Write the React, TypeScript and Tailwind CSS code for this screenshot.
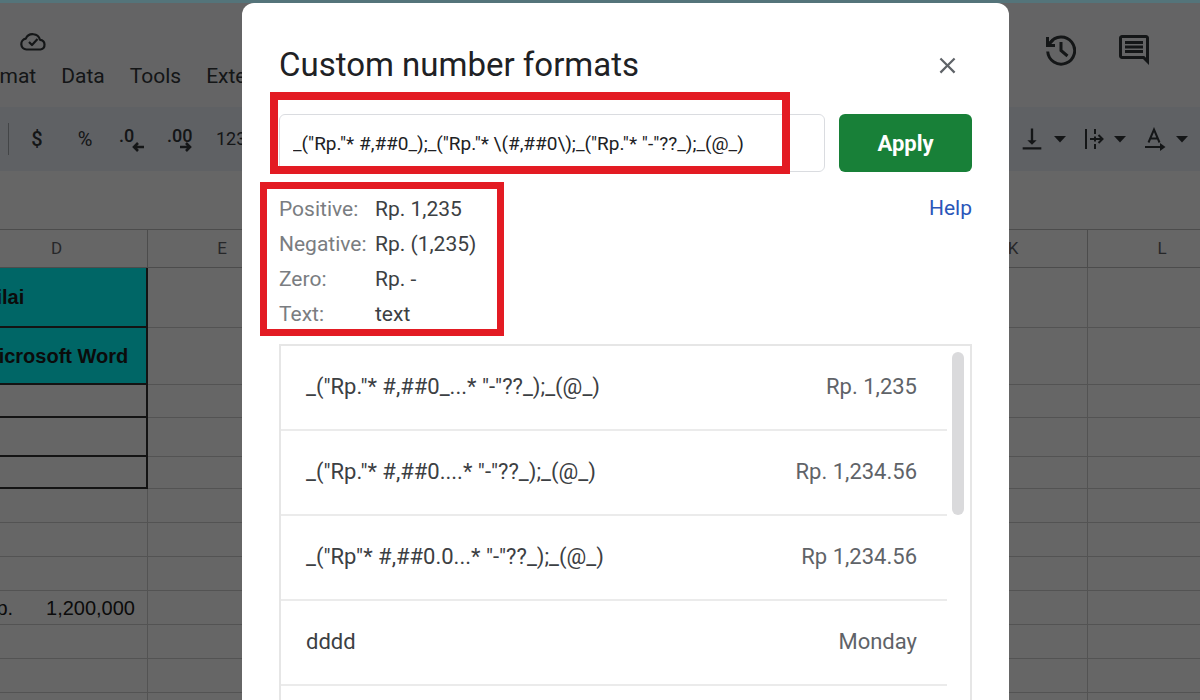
import { useState } from "react";
import type { ReactNode } from "react";
import { MdClose, MdOutlineInsertComment, MdVerticalAlignBottom } from "react-icons/md";

const FORMATS = [
  { pattern: '_("Rp."* #,##0_...* "-"??_);_(@_)', sample: "Rp. 1,235" },
  { pattern: '_("Rp."* #,##0....* "-"??_);_(@_)', sample: "Rp. 1,234.56" },
  { pattern: '_("Rp"* #,##0.0...* "-"??_);_(@_)', sample: "Rp 1,234.56" },
  { pattern: "dddd", sample: "Monday" },
  { pattern: "", sample: "" },
];

const PREVIEW = [
  { label: "Positive:", value: "Rp. 1,235" },
  { label: "Negative:", value: "Rp. (1,235)" },
  { label: "Zero:", value: "Rp. -" },
  { label: "Text:", value: "text" },
];

const COLUMNS = [
  { name: "D", width: "w-[182px]" },
  { name: "E", width: "w-[149px]" },
  { name: "F", width: "" },
  { name: "G", width: "" },
  { name: "H", width: "" },
  { name: "I", width: "" },
  { name: "J", width: "" },
  { name: "K", width: "w-[149px]" },
  { name: "L", width: "w-[149px]" },
];

// boxed = cell D has the black table border, fill = cyan header cell
const ROWS: { height: string; boxed?: boolean; fill?: boolean; cell?: ReactNode }[] = [
  { height: "h-[60px]", boxed: true, fill: true, cell: "Nilai" },
  { height: "h-[57px]", boxed: true, fill: true, cell: "Microsoft Word" },
  { height: "h-[33px]", boxed: true },
  { height: "h-[39px]", boxed: true },
  { height: "h-[32px]", boxed: true },
  { height: "h-[34px]" },
  { height: "h-[34px]" },
  { height: "h-[34px]" },
  {
    height: "h-[34px]",
    cell: (
      <span className="flex justify-between">
        <span>Rp.</span>
        <span>1,200,000</span>
      </span>
    ),
  },
  { height: "h-[34px]" },
  { height: "h-[34px]" },
  { height: "h-[34px]" },
];

function CloudIcon() {
  return (
    <svg viewBox="0 0 28 20" className="h-5 w-7" fill="none" stroke="currentColor" strokeWidth="2.2" strokeLinejoin="round">
      <path d="M7.500 18.500A5.500 5.500 0 0 1 6.800 7.600 7.600 7.600 0 0 1 21 8.800 4.900 4.900 0 0 1 21.500 18.500z" />
      <path d="M10 11l3 3 5.500-6" />
    </svg>
  );
}

function HistoryIcon() {
  return (
    <svg viewBox="0 0 32 32" className="size-8" fill="none" stroke="currentColor" strokeWidth="3">
      <path d="M3.700 17.500A13.500 13.500 0 1 0 6 9" />
      <path d="M3.500 3v8.500H11M4 11l5-5" />
      <path d="M17 8v8.500l6.500 5.500" />
    </svg>
  );
}

function Caret() {
  return (
    <svg viewBox="0 0 12 7" className="h-[7px] w-3" fill="currentColor">
      <path d="M0 0h12L6 6.500z" />
    </svg>
  );
}

function Arrow({ flip = false }: { flip?: boolean }) {
  return (
    <svg viewBox="0 0 12 10" className={`h-[10px] w-3 ${flip ? "rotate-180" : ""}`} fill="none" stroke="currentColor" strokeWidth="2.6">
      <path d="M0 5h10M6 1l4 4-4 4" />
    </svg>
  );
}

function OverflowIcon() {
  return (
    <svg viewBox="0 0 20 22" className="h-[22px] w-5" fill="none" stroke="currentColor" strokeWidth="2">
      <path d="M2 1v20M11 1v5M11 16v5M6 11h12M14.500 7l4 4-4 4M11 8.500v5" />
    </svg>
  );
}

function RotateIcon() {
  return (
    <svg viewBox="0 0 22 24" className="h-6 w-[22px]" fill="none" stroke="currentColor" strokeWidth="2">
      <path d="M4.500 15.500L10 2.500l5.500 13M6.500 11.500h7" />
      <path d="M1 20h17" />
      <path d="M16 16l5.500 4-5.500 4z" fill="currentColor" stroke="none" />
    </svg>
  );
}

function Header() {
  return (
    <header className="flex h-[104px] justify-between bg-[#f9fbfd] text-[#34373b]">
      <div>
        <div className="flex h-12 items-end pl-[19px]">
          <CloudIcon />
        </div>
        <nav className="-ml-[31px] mt-[11px] flex gap-[25px] text-[21px] leading-7">
          <button>Format</button>
          <button>Data</button>
          <button>Tools</button>
          <button>Extensions</button>
        </nav>
      </div>
      <div className="flex items-center gap-10 self-start pt-[29px] pr-12">
        <button aria-label="Version history">
          <HistoryIcon />
        </button>
        <button aria-label="Comments">
          <MdOutlineInsertComment className="size-9" />
        </button>
      </div>
    </header>
  );
}

function Toolbar() {
  return (
    <div className="flex h-16 items-center justify-between bg-[#edf2fa] text-[#34373b]">
      <div className="flex items-center pl-2 text-lg leading-6">
        <span className="mr-[22px] h-8 w-px bg-[#a9acb1]" />
        <button className="w-3 text-xl font-medium">$</button>
        <button className="ml-[34px] w-4 text-xl">%</button>
        <button className="ml-[26px] flex w-[25px] flex-col items-start font-medium leading-5">
          <span>.0</span>
          <span className="-mt-1 self-end"><Arrow flip /></span>
        </button>
        <button className="ml-[23px] flex w-[25px] flex-col items-start font-medium leading-5">
          <span>.00</span>
          <span className="-mt-1 self-end"><Arrow /></span>
        </button>
        <button className="ml-6">123</button>
      </div>
      <div className="flex items-center gap-3 pr-3">
        <button aria-label="Vertical align" className="flex items-center gap-2">
          <MdVerticalAlignBottom className="size-7" />
          <Caret />
        </button>
        <button aria-label="Text wrapping" className="ml-1.5 flex items-center gap-2.5">
          <OverflowIcon />
          <Caret />
        </button>
        <button aria-label="Text rotation" className="ml-1.5 flex items-center gap-2.5">
          <RotateIcon />
          <Caret />
        </button>
      </div>
    </div>
  );
}

function Sheet() {
  return (
    <table className="-ml-[34px] w-[calc(100%+71px)] table-fixed border-separate border-spacing-0 border-t border-[#bfbfbf] text-[#1c1c1c]">
      <thead>
        <tr className="h-[38px] text-[17px] text-[#5f6368]">
          {COLUMNS.map((col) => (
            <th key={col.name} className={`border-r border-b border-[#bfbfbf] p-0 font-normal ${col.width}`}>
              {col.name}
            </th>
          ))}
        </tr>
      </thead>
      <tbody className="font-['Liberation_Sans',sans-serif] text-xl leading-6">
        {ROWS.map((row, i) => (
          <tr key={i} className={row.height}>
            {COLUMNS.map((col, c) => (
              <td
                key={col.name}
                className={`whitespace-nowrap py-0 pr-3 pl-4 ${
                  c === 0 && row.boxed ? "border-r-2 border-b-2 border-[#303030]" : "border-r border-b border-[#d0d0d0]"
                } ${c === 0 && row.fill ? "bg-[#00ffff] font-bold" : ""}`}
              >
                {c === 0 ? row.cell : null}
              </td>
            ))}
          </tr>
        ))}
      </tbody>
    </table>
  );
}

function FormatDialog() {
  const [format, setFormat] = useState('_("Rp."* #,##0_);_("Rp."* \\(#,##0\\);_("Rp."* "-"??_);_(@_)');

  return (
    <div role="dialog" aria-labelledby="dialog-title" className="w-full overflow-hidden rounded-t-xl bg-white px-[37px] pt-10">
      <div className="flex h-11 items-center justify-between pr-[11px]">
        <h1 id="dialog-title" className="text-[33px] leading-[44px] text-[#202124]">
          Custom number formats
        </h1>
        <button aria-label="Close" className="text-[#5f6368]">
          <MdClose className="size-[27px]" />
        </button>
      </div>

      <div className="mt-[27px] flex gap-[14px]">
        <div className="relative flex-1">
          <input
            aria-label="Custom number format"
            value={format}
            onChange={(e) => setFormat(e.target.value)}
            className="h-[58px] w-full rounded-md border border-[#dadce0] pl-[13px] text-[19px] text-[#202124] outline-none"
          />
          <span className="pointer-events-none absolute -top-[22px] right-[35px] -bottom-[2px] -left-[9px] border-8 border-[#e31b23]" />
        </div>
        <button className="h-[58px] w-[133px] rounded-md bg-[#188038] text-[22px] font-bold text-white">Apply</button>
      </div>

      <div className="mt-5 flex items-start justify-between">
        <dl className="relative grid grid-cols-[96px_auto] text-[21px] leading-[35px]">
          {PREVIEW.map((item) => (
            <div key={item.label} className="contents">
              <dt className="text-[#7a7d81]">{item.label}</dt>
              <dd className="text-[#3c4043]">{item.value}</dd>
            </div>
          ))}
          <span className="pointer-events-none absolute -top-[10px] -bottom-1 -left-[19px] w-[244px] border-[7px] border-[#e31b23]" />
        </dl>
        <a href="#help" className="text-[21px] leading-8 text-[#2a56b9]">
          Help
        </a>
      </div>

      <div className="mt-3 flex items-start border-2 border-b-0 border-[#e6e6e6]">
        <ul className="flex-1">
          {FORMATS.map((f, i) => (
            <li key={i} className="border-b-2 border-[#ebebeb]">
              <button className="flex h-[83px] w-full items-center justify-between pr-[30px] pb-0.5 pl-[25px] text-[22px]">
                <span className="text-[#3c4043]">{f.pattern}</span>
                <span className="text-[#5f6368]">{f.sample}</span>
              </button>
            </li>
          ))}
        </ul>
        <span className="mr-1.5 ml-[5px] mt-1.5 h-[163px] w-3 rounded-full bg-[#dadadc]" />
      </div>
    </div>
  );
}

export default function App() {
  return (
    <div className="flex h-screen flex-col overflow-hidden font-[Roboto,sans-serif]">
      <div className="h-[3px] shrink-0 bg-[#54747a]" />
      <main className="relative flex-1 overflow-hidden bg-white">
        <Header />
        <Toolbar />
        <div className="h-[58px]" />
        <Sheet />
        {/* dimmed backdrop with the dialog on top */}
        <div className="absolute inset-0 flex items-start bg-black/60 pr-[191px] pl-[242px]">
          <FormatDialog />
        </div>
      </main>
    </div>
  );
}
